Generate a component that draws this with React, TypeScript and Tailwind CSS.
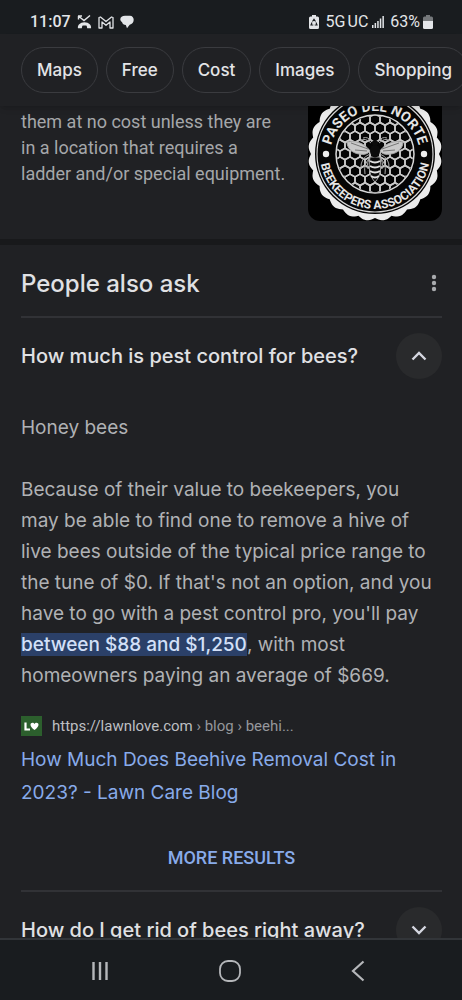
import React from 'react';

interface QuestionRowProps {
  question: string;
  open?: boolean;
}

const chips = ['Maps', 'Free', 'Cost', 'Images', 'Shopping'];

// Centre points of the honeycomb cells that fall inside the inner ring of the seal
const cells: { x: number; y: number }[] = [];
for (let row = -5; row <= 5; row++) {
  for (let col = -5; col <= 5; col++) {
    const x = col * 10 + (row % 2 === 0 ? 0 : 5);
    const y = row * 8.6;
    if (Math.hypot(x, y) < 44) cells.push({ x, y });
  }
}

// Wavy outer edge of the seal
const edge = Array.from({ length: 240 }, (_, i) => {
  const angle = (i / 240) * Math.PI * 2;
  const r = 64 + 2.8 * Math.abs(Math.sin(angle * 12));
  return `${(Math.cos(angle) * r).toFixed(1)},${(Math.sin(angle) * r).toFixed(1)}`;
}).join(' ');

const StatusBar: React.FC = () => (
  <div className="flex shrink-0 items-center justify-between bg-[#191c1f] pt-[10px] pr-[29px] pl-[30px] h-[34px] text-base text-[#e3e5e8]">
    <div className="flex items-center gap-[6px]">
      <span className="font-medium">11:07</span>
      <svg width="15" height="14" viewBox="0 0 15 14" aria-hidden="true">
        <path d="M1 1h4M1.500 1v3.500M2 1.500l5 4 6-5" fill="none" stroke="currentColor" strokeWidth="1.400" />
        <path d="M1 13.300C.2 10.500 3 7.300 7.500 7.300s7.300 3.200 6.500 6h-3.800l-.5-2.500c-1.400-.5-3-.5-4.400 0l-.5 2.500z" fill="currentColor" />
      </svg>
      <svg width="16" height="13" viewBox="0 0 16 13" aria-hidden="true">
        <path d="M1 12V1.500L2.500 1 8 5.500 13.500 1l1.500.5V12h-3V6L8 9.300 4 6v6z" fill="none" stroke="currentColor" strokeWidth="1.300" strokeLinejoin="round" />
      </svg>
      <svg width="14" height="14" viewBox="0 0 14 14" aria-hidden="true">
        <path d="M5 .8h5c2.200 0 3.700 1.700 3.700 4 0 2.600-1.500 4.500-4 5L7 13.200 5.800 10C4 10 2.300 9 2 7 .8 6.500.3 5.500.3 4.300.3 2 2.300.8 5 .8z" fill="currentColor" />
      </svg>
    </div>
    <div className="flex items-center">
      <svg className="mr-[7px]" width="10" height="14" viewBox="0 0 10 14" aria-hidden="true">
        <path d="M3 0h4v1.500h1.500Q10 1.500 10 3v9.500Q10 14 8.500 14h-7Q0 14 0 12.500V3q0-1.500 1.500-1.500H3z" fill="currentColor" />
        <path d="M3.500 6.500 5 4.300l1.500 2.200M7 7.500l1 2.500H5.700M3 7.500 2 10h2.300" fill="none" stroke="#191c1f" strokeWidth="1.100" />
      </svg>
      <span>5G</span>
      <span className="ml-[2px]">UC</span>
      <svg className="ml-[4px]" width="12" height="12" viewBox="0 0 12 12" fill="currentColor" aria-hidden="true">
        <path d="M0 9h1.500v3H0zM2.600 7h1.500v5H2.600zM5.200 5h1.500v7H5.200zM7.800 2.500h1.500V12H7.800zM10.400 0h1.500v12h-1.500z" />
      </svg>
      <span className="ml-[6px]">63%</span>
      <svg className="ml-[3px]" width="10" height="14" viewBox="0 0 10 14" aria-hidden="true">
        <path d="M3 0h4v1.500h1.500Q10 1.500 10 3v3H0V3q0-1.500 1.500-1.500H3z" fill="#75787b" />
        <path d="M0 6h10v6.500Q10 14 8.500 14h-7Q0 14 0 12.500z" fill="currentColor" />
      </svg>
    </div>
  </div>
);

const Seal: React.FC = () => (
  <svg
    className="h-[115px] w-[134px] shrink-0 rounded-b-xl bg-black"
    viewBox="-67 -48 134 115"
    role="img"
    aria-label="Paseo del Norte Beekeepers Association"
  >
    <defs>
      <path id="seal-top" d="M-45 2A45 45 0 0 1 45 2" />
      <path id="seal-bottom" d="M-55 0A55 55 0 0 0 55 0" />
      <clipPath id="seal-inner">
        <circle r="38" />
      </clipPath>
    </defs>
    <polygon points={edge} fill="#ececec" />
    <circle r="60" fill="#050505" />
    <circle r="58" fill="none" stroke="#d8d8d8" strokeWidth="1.200" />
    <g clipPath="url(#seal-inner)" fill="none" stroke="#c8c8c8" strokeWidth="1.600">
      {cells.map((c, i) => (
        <path key={i} transform={`translate(${c.x} ${c.y})`} d="M0-5.700 5-2.900V2.900L0 5.700-5 2.900V-2.900z" />
      ))}
    </g>
    <circle r="39" fill="none" stroke="#d8d8d8" strokeWidth="1.500" />
    <g fill="#0a0a0a" stroke="#a8a8a8" strokeWidth="1">
      <path d="M-4-11q-6-6-11-2M4-11q6-6 11-2M-3-12q-4-6-9-4M3-12q4-6 9-4" fill="none" />
      <path d="M-5 0q-10 4-9 15M5 0q10 4 9 15M-4 3q-8 6-6 17M4 3q8 6 6 17M-4 3q-5 5-3 12M4 3q5 5 3 12" fill="none" />
      <path d="M-5-3C-12-13-22-13-28-12c0 6 5 11 12 12 5 1 9 0 11-3zM5-3C12-13 22-13 28-12c0 6-5 11-12 12-5 1-9 0-11-3z" fill="#c9c9c9" />
      <path d="M-7-5-24-11M-8-3-20-4M7-5 24-11M8-3 20-4" stroke="#777" />
      <path d="M-5 3C-7 14-5 23 0 28 5 23 7 14 5 3z" />
      <path d="M-5 7q5 3 10 0M-5 12q5 3 10 0M-5 17q5 3 10 0M-4 22q4 3 8 0" stroke="#e0e0e0" strokeWidth="1.900" fill="none" />
      <ellipse cy="-3" rx="5" ry="6.500" stroke="none" />
      <circle cy="-11" r="3" stroke="none" />
    </g>
    <circle cx="-49" r="3.200" fill="#eee" />
    <circle cx="49" r="3.200" fill="#eee" />
    <g className="font-['Roboto',sans-serif] font-bold" fill="#e6e6e6" textAnchor="middle">
      <text fontSize="14">
        <textPath href="#seal-top" startOffset="50%">PASEO DEL NORTE</textPath>
      </text>
      <text fontSize="12">
        <textPath href="#seal-bottom" startOffset="50%">BEEKEEPERS ASSOCIATION</textPath>
      </text>
    </g>
  </svg>
);

const QuestionRow: React.FC<QuestionRowProps> = ({ question, open = false }) => (
  <div className="flex items-center justify-between border-t-2 border-[#313236] pt-[15px]">
    <h3 className="text-[20px] font-medium whitespace-nowrap text-[#e0e1e4]">{question}</h3>
    <button
      aria-label={question}
      aria-expanded={open}
      className="flex size-[46px] shrink-0 items-center justify-center rounded-full bg-[#292a2c] text-[#d5d7e0]"
    >
      <svg width="16" height="10" viewBox="0 0 16 10" fill="none" stroke="currentColor" strokeWidth="2.400" aria-hidden="true">
        <path d={open ? 'M1.500 8.500 8 2l6.500 6.500' : 'M1.500 1.500 8 8l6.500-6.500'} />
      </svg>
    </button>
  </div>
);

const NavBar: React.FC = () => (
  <nav className="flex h-[62px] shrink-0 items-center justify-around border-t-2 border-[#323539] bg-[#191c1f] pt-[2px] pr-[42px] pl-9 text-[#b5b7ba]">
    <button aria-label="Recent apps">
      <svg width="18" height="20" viewBox="0 0 18 20" stroke="currentColor" strokeWidth="2.400">
        <path d="M2.500 1v18M9 1v18M15.500 1v18" />
      </svg>
    </button>
    <button aria-label="Home">
      <svg width="22" height="22" viewBox="0 0 22 22" fill="none" stroke="currentColor" strokeWidth="1.800">
        <rect x="1" y="1" width="20" height="20" rx="8" />
      </svg>
    </button>
    <button aria-label="Back">
      <svg width="14" height="22" viewBox="0 0 14 22" fill="none" stroke="currentColor" strokeWidth="2.200">
        <path d="M12.500 1.500 2 11l10.500 9.500" />
      </svg>
    </button>
  </nav>
);

const App: React.FC = () => {
  return (
    <div className="flex h-screen flex-col overflow-hidden bg-[#202124] font-['Roboto',sans-serif] text-[#b0b2b5]">
      <StatusBar />

      <div className="z-10 flex shrink-0 gap-2 overflow-hidden pt-[13px] pb-[13px] pl-[21px] shadow-md">
        {chips.map((chip) => (
          <button
            key={chip}
            className="h-[46px] shrink-0 rounded-full border-[1px] border-[#3a3b3f] px-[15px] pt-[2px] font-['Inter',sans-serif] text-[17px] font-medium text-[#e3e4e7]"
          >
            {chip}
          </button>
        ))}
      </div>

      <main className="min-h-0 flex-1 overflow-hidden">
        <section className="flex justify-between border-b-6 border-[#18191b] pr-[20px] pb-[18px] pl-[21px]">
          <p className="pt-[3px] text-[18px] leading-[26px] whitespace-nowrap text-[#a5a7aa]">
            them at no cost unless they are
            <br />
            in a location that requires a
            <br />
            ladder and/or special equipment.
          </p>
          <Seal />
        </section>

        <section className="pr-[20px] pl-[21px] font-['Inter',sans-serif]">
          <div className="flex h-[71px] items-center justify-between pt-[5px]">
            <h2 className="pt-[2px] text-[24px] font-medium text-[#e0e1e4]">People also ask</h2>
            <button aria-label="More options" className="px-[5px]">
              <svg width="6" height="18" viewBox="0 0 6 18" fill="#a9abae">
                <circle cx="3" cy="3" r="2.200" />
                <circle cx="3" cy="9" r="2.200" />
                <circle cx="3" cy="15" r="2.200" />
              </svg>
            </button>
          </div>

          <QuestionRow question="How much is pest control for bees?" open />

          <div className="pt-[33px] text-[19px] leading-[31px] whitespace-nowrap">
            <p>Honey bees</p>
            <p className="mt-[31px]">
              Because of their value to beekeepers, you
              <br />
              may be able to find one to remove a hive of
              <br />
              live bees outside of the typical price range to
              <br />
              the tune of $0. If that's not an option, and you
              <br />
              have to go with a pest control pro, you'll pay
              <br />
              <b className="bg-[#2b4068] font-medium text-[#d3e0f8]">between $88 and $1,250</b>, with most
              <br />
              homeowners paying an average of $669.
            </p>
          </div>

          <a href="#" className="mt-[25px] block">
            <span className="flex h-5 items-center gap-[10px] font-['Roboto',sans-serif] text-[15px] text-[#bdbfc2]">
              <svg width="21" height="20" viewBox="0 0 21 20" aria-hidden="true">
                <rect width="21" height="20" fill="#2c5f2d" />
                <path d="M4.500 6.500v7H9" fill="none" stroke="#fff" strokeWidth="2.200" />
                <path d="M13.500 14C11 12 9.500 10.500 9.500 8.700c0-2.200 3-2.700 4-.7 1-2 4-1.500 4 .7 0 1.800-1.500 3.300-4 5.300z" fill="#fff" />
              </svg>
              <span>
                https://lawnlove.com<span className="text-[#95979b]"> › blog › beehi...</span>
              </span>
            </span>
            <span className="mt-[7px] block text-[19px] leading-[33px] whitespace-nowrap text-[#88abea]">
              How Much Does Beehive Removal Cost in
              <br />
              2023? - Lawn Care Blog
            </span>
          </a>

          <button className="mt-[15px] block h-[66px] w-full font-['Roboto',sans-serif] text-[18px] font-medium text-[#88abea]">
            MORE RESULTS
          </button>

          <QuestionRow question="How do I get rid of bees right away?" />
        </section>
      </main>

      <NavBar />
    </div>
  );
};

export default App;
